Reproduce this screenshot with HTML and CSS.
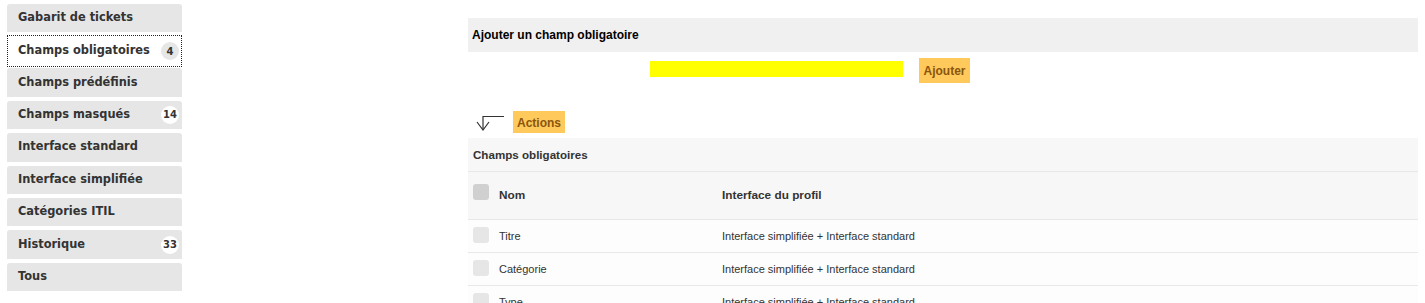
FILE: index.html
```html
<!DOCTYPE html>
<html lang="fr">
<head>
<meta charset="utf-8">
<title>Champs obligatoires</title>
<link rel="stylesheet" href="styles.css">
</head>
<body>
<div class="page">
  <nav class="tabs">
    <div class="tab"><span class="tab-label">Gabarit de tickets</span></div>
    <div class="tab active"><span class="tab-label">Champs obligatoires</span><span class="badge grey">4</span></div>
    <div class="tab"><span class="tab-label">Champs prédéfinis</span></div>
    <div class="tab"><span class="tab-label">Champs masqués</span><span class="badge">14</span></div>
    <div class="tab"><span class="tab-label">Interface standard</span></div>
    <div class="tab"><span class="tab-label">Interface simplifiée</span></div>
    <div class="tab"><span class="tab-label">Catégories ITIL</span></div>
    <div class="tab"><span class="tab-label">Historique</span><span class="badge">33</span></div>
    <div class="tab"><span class="tab-label">Tous</span></div>
  </nav>
  <main class="main">
    <div class="add-header">Ajouter un champ obligatoire</div>
    <div class="add-row">
      <div class="field"></div>
      <button class="btn btn-add">Ajouter</button>
    </div>
    <div class="actions-row">
      <svg class="arrow" width="30" height="20" viewBox="0 0 30 20">
        <path d="M28 1.5 H7 V14.5" fill="none" stroke="#333" stroke-width="1.2"/>
        <path d="M1 7 L7 15 L13 7" fill="none" stroke="#333" stroke-width="1.2"/>
      </svg>
      <button class="btn btn-actions">Actions</button>
    </div>
    <div class="table">
      <div class="caption">Champs obligatoires</div>
      <div class="row head">
        <span class="check dark"></span>
        <span class="cell">Nom</span>
        <span class="cell">Interface du profil</span>
      </div>
      <div class="row">
        <span class="check"></span>
        <span class="cell">Titre</span>
        <span class="cell">Interface simplifiée + Interface standard</span>
      </div>
      <div class="row">
        <span class="check"></span>
        <span class="cell">Catégorie</span>
        <span class="cell">Interface simplifiée + Interface standard</span>
      </div>
      <div class="row">
        <span class="check"></span>
        <span class="cell">Type</span>
        <span class="cell">Interface simplifiée + Interface standard</span>
      </div>
    </div>
  </main>
</div>
</body>
</html>
```

FILE: styles.css
```css
html, body {
  margin: 0;
  padding: 0;
  background: #fff;
  overflow: hidden;
}

.page {
  display: flex;
  align-items: flex-start;
  height: 303px;
}

.tabs {
  width: 175px;
  padding: 4px 0 0 7px;
  display: flex;
  flex-direction: column;
  gap: 4px;
  flex: none;
}

.tab {
  height: 28.4px;
  box-sizing: border-box;
  background: #e6e6e6;
  border-radius: 3px 3px 0 0;
  display: flex;
  align-items: center;
  justify-content: space-between;
  padding: 0 3px 0 11px;
  font-family: "DejaVu Sans", Verdana, sans-serif;
  font-weight: bold;
  font-size: 11.4px;
  color: #333;
}

.tab.active {
  background: #fff;
  border: 1px dotted #222;
  border-radius: 0;
  padding-left: 10px;
  padding-right: 2px;
  height: 32px;
  margin: -1px 0 -3px;
}

.tab-label {
  position: relative;
  top: -1px;
}

.badge {
  width: 18px;
  height: 18px;
  border-radius: 50%;
  background: #fff;
  display: flex;
  align-items: center;
  justify-content: center;
  font-size: 10px;
  color: #333;
}

.badge.grey {
  background: #e6e6e6;
}

.main {
  flex: 1;
  margin-left: 286px;
  margin-right: 7px;
  padding-top: 18px;
  font-family: "Liberation Sans", Arial, sans-serif;
  font-size: 12px;
}

.add-header {
  height: 34px;
  line-height: 34px;
  background: #f0f0f0;
  padding-left: 4px;
  font-weight: bold;
  color: #000;
}

.add-row {
  display: flex;
  align-items: center;
  gap: 16px;
  padding-left: 182px;
  margin-top: 6px;
  height: 25px;
}

.field {
  width: 253px;
  height: 16px;
  background: #ffff00;
  margin-top: -3px;
}

.btn {
  border: none;
  background: #ffc95c;
  color: #8a560c;
  font-family: "Liberation Sans", Arial, sans-serif;
  font-weight: bold;
  font-size: 12px;
  padding: 0;
  margin: 0;
}

.btn-add {
  width: 51px;
  height: 25px;
}

.actions-row {
  display: flex;
  align-items: center;
  margin-top: 28px;
  height: 22px;
  padding-left: 8px;
}

.arrow {
  display: block;
  margin-top: 6px;
  margin-right: 7px;
}

.btn-actions {
  width: 52px;
  height: 22px;
  padding-top: 2px;
}

.table {
  margin-top: 5px;
  color: #333;
}

.caption {
  height: 33px;
  line-height: 33px;
  background: #f7f7f7;
  padding-left: 5px;
  font-weight: bold;
  font-size: 11.6px;
  border-bottom: 1px solid #e8e8e8;
}

.row {
  display: grid;
  grid-template-columns: 26px 223px 1fr;
  align-items: center;
  height: 32px;
  padding-left: 5px;
  border-bottom: 1px solid #e8e8e8;
  background: #fdfdfd;
  font-size: 11px;
}

.row.head {
  height: 47px;
  background: #f7f7f7;
  font-weight: bold;
  font-size: 11.8px;
}

.row .cell {
  position: relative;
  top: 0;
}

.row.head .cell {
  top: -1px;
}

.check {
  width: 16px;
  height: 16px;
  border-radius: 3px;
  background: #e6e6e6;
  position: relative;
  top: -1px;
}

.check.dark {
  background: #d0d0d0;
  top: -4px;
}
```
